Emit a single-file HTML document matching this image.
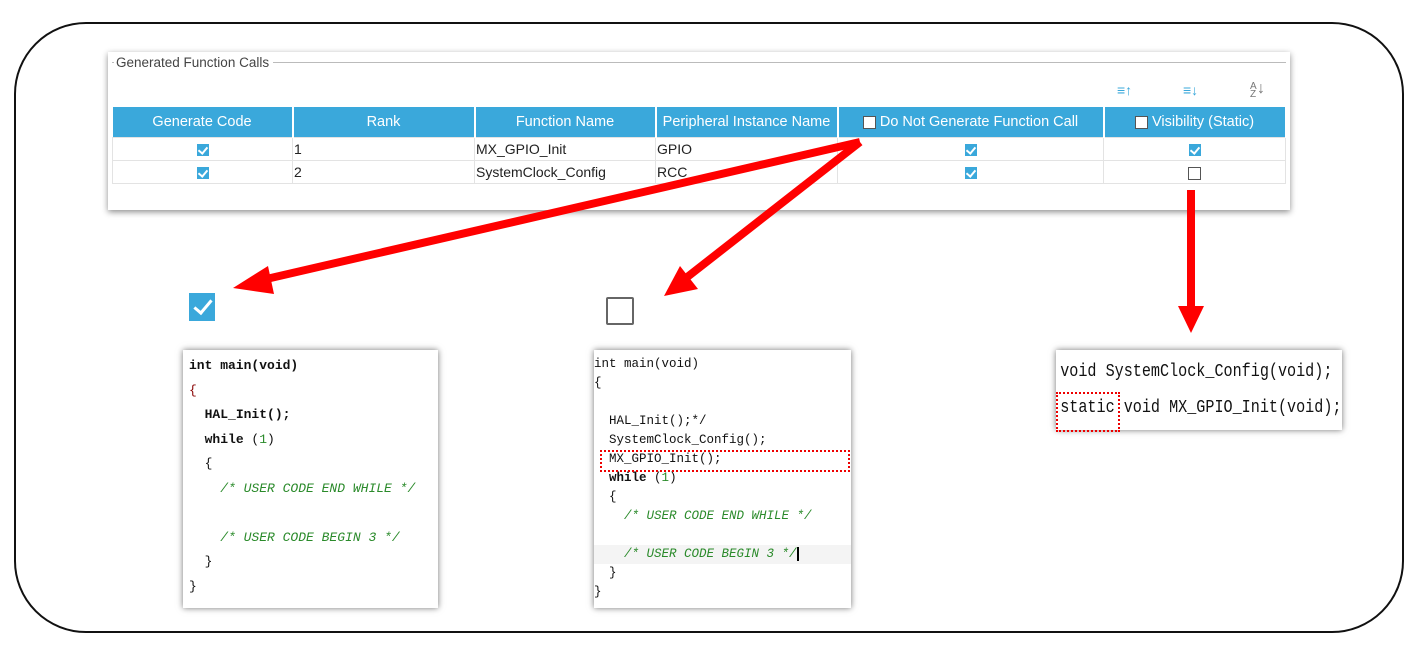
<!DOCTYPE html>
<html><head><meta charset="utf-8"><style>
body{margin:0;width:1416px;height:649px;background:#fff;position:relative;overflow:hidden;font-family:"Liberation Sans",sans-serif}
.abs{position:absolute}
.outer{left:14px;top:22px;width:1386px;height:607px;border:2px solid #111;border-radius:72px}
.panel{left:108px;top:52px;width:1182px;height:158px;background:#fff;box-shadow:0 2px 6px rgba(0,0,0,.45)}
.legend{left:112px;top:62px;width:1174px;height:1px;background:#bbb}
.lt{left:114px;top:55px;background:#fff;font-size:13.5px;color:#444;padding:0 4px 0 2px}
table{position:absolute;left:112px;top:107px;border-collapse:collapse;font-size:14.5px;color:#222}
th{background:#3aa8db;color:#fff;font-weight:normal;height:30px;border:1px solid #fff;border-width:0 2px 0 0;padding:0}
td{height:22px;border:1px solid #e3e3e3;padding:0 1px;font-size:14px}
.cb{display:inline-block;width:12px;height:12px;background:#3aa8db;position:relative;vertical-align:middle}
.cb:after{content:"";position:absolute;left:3px;top:1px;width:4px;height:7px;border:solid #fff;border-width:0 2px 2px 0;transform:rotate(40deg)}
.ecb{display:inline-block;width:11px;height:11px;border:1px solid #555;background:#fff;vertical-align:middle}
.code{background:#fff;box-shadow:0 0 6px rgba(0,0,0,.55);font-family:"Liberation Mono",monospace;font-size:13px;color:#111;white-space:pre}
.cm{color:#2a8a2a;font-style:italic}
</style></head><body>
<div class="abs outer"></div>
<div class="abs panel"></div>
<div class="abs legend"></div>
<div class="abs lt">Generated Function Calls</div>
<div class="abs" style="left:1117px;top:82px;color:#3aa8db;font-size:14px;font-weight:bold">≡↑</div>
<div class="abs" style="left:1183px;top:82px;color:#3aa8db;font-size:14px;font-weight:bold">≡↓</div>
<div class="abs" style="left:1250px;top:83px;color:#777;font-size:10px;line-height:8px">A<br>Z</div>
<div class="abs" style="left:1257px;top:80px;color:#777;font-size:16px">↓</div>
<table>
<tr><th style="width:179px">Generate Code</th><th style="width:180px">Rank</th><th style="width:179px">Function Name</th><th style="width:180px">Peripheral Instance Name</th><th style="width:264px"><span class="ecb"></span> Do Not Generate Function Call</th><th style="width:180px"><span class="ecb"></span> Visibility (Static)</th></tr>
<tr><td align="center"><span class="cb"></span></td><td>1</td><td>MX_GPIO_Init</td><td>GPIO</td><td align="center"><span class="cb"></span></td><td align="center"><span class="cb"></span></td></tr>
<tr><td align="center"><span class="cb"></span></td><td>2</td><td>SystemClock_Config</td><td>RCC</td><td align="center"><span class="cb"></span></td><td align="center"><span class="ecb" style="width:11px;height:11px"></span></td></tr>
</table>
<div class="abs" style="left:189px;top:293px;width:26px;height:28px;background:#3aa8db"></div>
<div class="abs" style="left:198px;top:296px;width:7px;height:15px;border:solid #fff;border-width:0 3px 3px 0;transform:rotate(40deg)"></div>
<div class="abs" style="left:606px;top:297px;width:24px;height:24px;border:2px solid #666;border-radius:2px"></div>
<div class="abs code" style="left:183px;top:350px;width:255px;height:258px;line-height:24.5px;padding:4px 0 0 6px;box-sizing:border-box"><b>int main(void)</b>
<span style="color:#800">{</span>
  <b>HAL_Init();</b>
  <b>while</b> (<span style="color:#2a8a2a">1</span>)
  {
    <span class="cm">/* USER CODE END WHILE */</span>

    <span class="cm">/* USER CODE BEGIN 3 */</span>
  }
}</div>
<div class="abs code" style="left:594px;top:350px;width:257px;height:258px;line-height:19px;font-size:12.5px;padding:5px 0 0 0;box-sizing:border-box">int main(void)
{

  HAL_Init();*/
  SystemClock_Config();
  MX_GPIO_Init();
  <b>while</b> (<span style="color:#2a8a2a">1</span>)
  {
    <span class="cm">/* USER CODE END WHILE */</span>

<span style="background:#f4f4f4;display:inline-block;width:257px">    <span class="cm">/* USER CODE BEGIN 3 */</span><span style="border-left:2px solid #000"> </span></span>
  }
}</div>
<div class="abs" style="left:600px;top:450px;width:250px;height:22px;border:2px dotted #e00;box-sizing:border-box"></div>
<div class="abs code" style="left:1056px;top:350px;width:286px;height:80px;padding:0;box-sizing:border-box"><div style="font-size:18px;line-height:36px;padding:4px 0 0 5px;transform:scaleX(0.84);transform-origin:0 0">void SystemClock_Config(void);
static void MX_GPIO_Init(void);</div></div>
<div class="abs" style="left:1056px;top:392px;width:64px;height:40px;border:2px dotted #e00;box-sizing:border-box"></div>
<svg class="abs" style="left:0;top:0" width="1416" height="649">
<g stroke="#f00" stroke-width="8" fill="none" stroke-linecap="butt">
<line x1="860" y1="142" x2="262" y2="280"/>
<line x1="860" y1="142" x2="686" y2="278"/>
<line x1="1191" y1="190" x2="1191" y2="310"/>
</g>
<g fill="#f00">
<polygon points="233,288 268,266 274,294"/>
<polygon points="664,296 680,266 698,289"/>
<polygon points="1191,333 1178,306 1204,306"/>
</g>
</svg>
</body></html>
